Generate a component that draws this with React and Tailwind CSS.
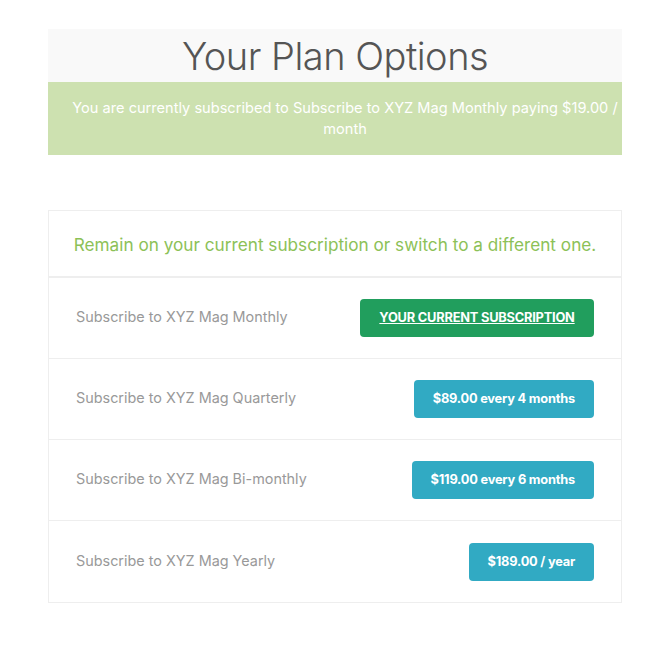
export default function App() {
  const rows = [
    { name: "Subscribe to XYZ Mag Monthly", label: "YOUR CURRENT SUBSCRIPTION", current: true },
    { name: "Subscribe to XYZ Mag Quarterly", label: "$89.00 every 4 months" },
    { name: "Subscribe to XYZ Mag Bi-monthly", label: "$119.00 every 6 months" },
    { name: "Subscribe to XYZ Mag Yearly", label: "$189.00 / year" },
  ];
  return (
    <div className="min-h-[652px] bg-white pt-[29px] font-['Inter',sans-serif]">
      <div className="mx-[48px] w-[574px]">
        <div className="bg-[#f9f9f9] h-[53px] flex items-center justify-center">
          <h1 className="text-[38px] font-light text-[#555555] leading-none tracking-[-0.5px]">Your Plan Options</h1>
        </div>
        <div className="bg-[#cde1b0] h-[73px] flex items-center justify-center pl-[22px] pr-[2px] text-center">
          <p className="text-white text-[14.6px] leading-[21px]">
            You are currently subscribed to Subscribe to XYZ Mag Monthly paying $19.00 / month
          </p>
        </div>
        <div className="mt-[55px] border border-[#eeeeee]">
          <div className="h-[67px] flex items-center justify-center border-b-2 border-[#eeeeee]">
            <p className="text-[17.2px] text-[#8cc157] pt-[2px]">Remain on your current subscription or switch to a different one.</p>
          </div>
          {rows.map((r, i) => (
            <div
              key={i}
              className={`h-[81px] flex items-center justify-between px-[27px] ${i < rows.length - 1 ? "border-b border-[#eeeeee]" : ""}`}
            >
              <span className="text-[14.4px] text-[#999999] pb-[2px]">{r.name}</span>
              {r.current ? (
                <button className="h-[38px] w-[234px] rounded-[4px] bg-[#219e5d] text-white text-[12.8px] font-bold underline tracking-[-0.2px]">
                  {r.label}
                </button>
              ) : (
                <button className="h-[38px] px-[19px] rounded-[4px] bg-[#31aac3] text-white text-[12.8px] font-bold tracking-[-0.2px]">
                  {r.label}
                </button>
              )}
            </div>
          ))}
        </div>
      </div>
    </div>
  );
}
